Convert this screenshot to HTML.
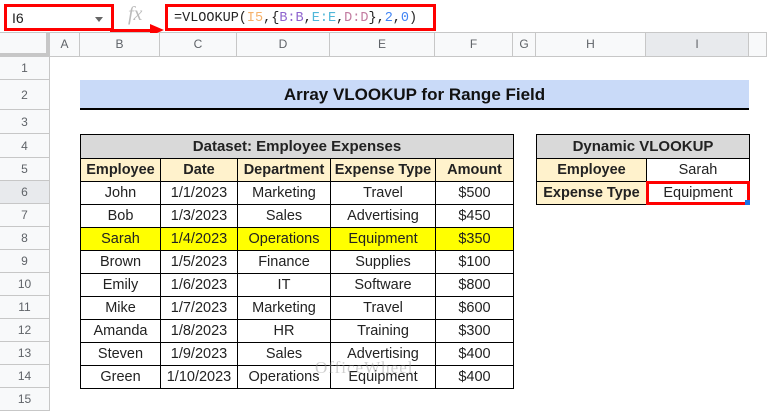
<!DOCTYPE html>
<html><head><style>
body{margin:0;width:767px;height:411px;overflow:hidden;background:#fff;font-family:"Liberation Sans",Arial,sans-serif;position:relative}
.a{position:absolute;box-sizing:border-box}
.hd{background:#f8f9fa;color:#5f6368;font-size:12px;text-align:center;border-right:1px solid #c7c7c7;border-bottom:1px solid #c7c7c7}
.c{position:absolute;box-sizing:border-box;border:1px solid #000;font-size:14.5px;color:#222;text-align:center;display:flex;align-items:center;justify-content:center;white-space:nowrap}
.b{font-weight:bold}
</style></head><body>
<!-- formula bar -->
<div class="a" style="left:0;top:0;width:767px;height:33px;background:#fff;border-bottom:1px solid #c7c7c7"></div>
<div class="a" style="left:4px;top:4px;width:110px;height:27px;border:3px solid #f00;font-size:14px;padding:3px 5px;color:#222">I6<span style="position:absolute;right:8px;top:10px;border-left:4px solid transparent;border-right:4px solid transparent;border-top:5px solid #666"></span></div>
<div class="a" style="left:128px;top:3px;font-family:'Liberation Serif',serif;font-style:italic;font-size:20px;color:#bbb">fx</div>
<div class="a" style="left:165px;top:4px;width:271px;height:27px;border:3px solid #f00;font-family:'Liberation Mono',monospace;font-size:13.5px;padding:4px 6px;color:#222;white-space:nowrap">=VLOOKUP(<span style="color:#f6b26b">I5</span>,{<span style="color:#8e63ce">B:B</span>,<span style="color:#4fb7d9">E:E</span>,<span style="color:#c27ba0">D:D</span>},<span style="color:#4285f4">2</span>,<span style="color:#4285f4">0</span>)</div>
<div class="a" style="left:110px;top:29px;width:42px;height:3px;background:#f00"></div>
<div class="a" style="left:150px;top:24px;border-top:6px solid transparent;border-bottom:6px solid transparent;border-left:14px solid #f00"></div>
<!-- column headers -->
<div class="a hd" style="left:0;top:33px;width:50px;height:24px;border-right:4px solid #c7c7c7;border-bottom:4px solid #c7c7c7"></div>
<div class="a hd" style="left:50px;top:33px;width:30px;height:24px;line-height:23px">A</div>
<div class="a hd" style="left:80px;top:33px;width:80px;height:24px;line-height:23px">B</div>
<div class="a hd" style="left:160px;top:33px;width:77px;height:24px;line-height:23px">C</div>
<div class="a hd" style="left:237px;top:33px;width:93px;height:24px;line-height:23px">D</div>
<div class="a hd" style="left:330px;top:33px;width:105px;height:24px;line-height:23px">E</div>
<div class="a hd" style="left:435px;top:33px;width:78px;height:24px;line-height:23px">F</div>
<div class="a hd" style="left:513px;top:33px;width:23px;height:24px;line-height:23px">G</div>
<div class="a hd" style="left:536px;top:33px;width:110px;height:24px;line-height:23px">H</div>
<div class="a hd" style="left:646px;top:33px;width:103px;height:24px;line-height:23px;background:#e8eaed">I</div>
<div class="a hd" style="left:749px;top:33px;width:18px;height:24px"></div>
<!-- row headers -->
<div class="a hd" style="left:0;top:57px;width:50px;height:23px;line-height:23px">1</div>
<div class="a hd" style="left:0;top:80px;width:50px;height:30px;line-height:30px">2</div>
<div class="a hd" style="left:0;top:110px;width:50px;height:24px;line-height:24px">3</div>
<div class="a hd" style="left:0;top:134px;width:50px;height:24px;line-height:24px">4</div>
<div class="a hd" style="left:0;top:158px;width:50px;height:23px;line-height:23px">5</div>
<div class="a hd" style="left:0;top:181px;width:50px;height:23px;line-height:23px;background:#e8eaed">6</div>
<div class="a hd" style="left:0;top:204px;width:50px;height:23px;line-height:23px">7</div>
<div class="a hd" style="left:0;top:227px;width:50px;height:23px;line-height:23px">8</div>
<div class="a hd" style="left:0;top:250px;width:50px;height:23px;line-height:23px">9</div>
<div class="a hd" style="left:0;top:273px;width:50px;height:23px;line-height:23px">10</div>
<div class="a hd" style="left:0;top:296px;width:50px;height:23px;line-height:23px">11</div>
<div class="a hd" style="left:0;top:319px;width:50px;height:23px;line-height:23px">12</div>
<div class="a hd" style="left:0;top:342px;width:50px;height:23px;line-height:23px">13</div>
<div class="a hd" style="left:0;top:365px;width:50px;height:23px;line-height:23px">14</div>
<div class="a hd" style="left:0;top:388px;width:50px;height:23px;line-height:23px">15</div>
<!-- title -->
<div class="a b" style="left:80px;top:80px;width:669px;height:30px;background:#c9daf8;border-bottom:2px solid #000;text-align:center;font-size:17px;line-height:29px;color:#111">Array VLOOKUP for Range Field</div>
<!-- dataset -->
<div class="c b" style="left:80px;top:134px;width:434px;height:25px;background:#d9d9d9;font-size:15px">Dataset: Employee Expenses</div>
<div id="t"></div>
<!-- dynamic -->
<div class="c b" style="left:536px;top:134px;width:214px;height:25px;background:#d9d9d9;font-size:15px">Dynamic VLOOKUP</div>
<div class="c b" style="left:536px;top:158px;width:111px;height:24px;background:#fff2cc">Employee</div>
<div class="c" style="left:646px;top:158px;width:104px;height:24px">Sarah</div>
<div class="c b" style="left:536px;top:181px;width:111px;height:24px;background:#fff2cc">Expense Type</div>
<div class="c" style="left:646px;top:181px;width:104px;height:24px;border:3px solid #f00">Equipment</div>
<div class="a" style="left:745px;top:200px;width:5px;height:5px;background:#1a73e8"></div>
<script>
var cols=[[80,81],[160,78],[237,94],[330,106],[435,79]];
var rows=[["Employee","Date","Department","Expense Type","Amount"],["John","1/1/2023","Marketing","Travel","$500"],["Bob","1/3/2023","Sales","Advertising","$450"],["Sarah","1/4/2023","Operations","Equipment","$350"],["Brown","1/5/2023","Finance","Supplies","$100"],["Emily","1/6/2023","IT","Software","$800"],["Mike","1/7/2023","Marketing","Travel","$600"],["Amanda","1/8/2023","HR","Training","$300"],["Steven","1/9/2023","Sales","Advertising","$400"],["Green","1/10/2023","Operations","Equipment","$400"]];
var h="";
rows.forEach(function(r,i){var y=158+i*23;r.forEach(function(t,j){var bg=i==0?"#fff2cc":(i==3?"#ffff00":"#fff");h+='<div class="c'+(i==0?' b':'')+'" style="left:'+cols[j][0]+'px;top:'+y+'px;width:'+cols[j][1]+'px;height:24px;background:'+bg+'">'+t+'</div>';});});
document.getElementById("t").outerHTML=h;
</script>
<div class="a" style="left:315px;top:358px;font-family:'Liberation Serif',serif;font-size:17px;color:rgba(150,150,150,0.45);letter-spacing:1px">OfficeWheel</div>
</body></html>
